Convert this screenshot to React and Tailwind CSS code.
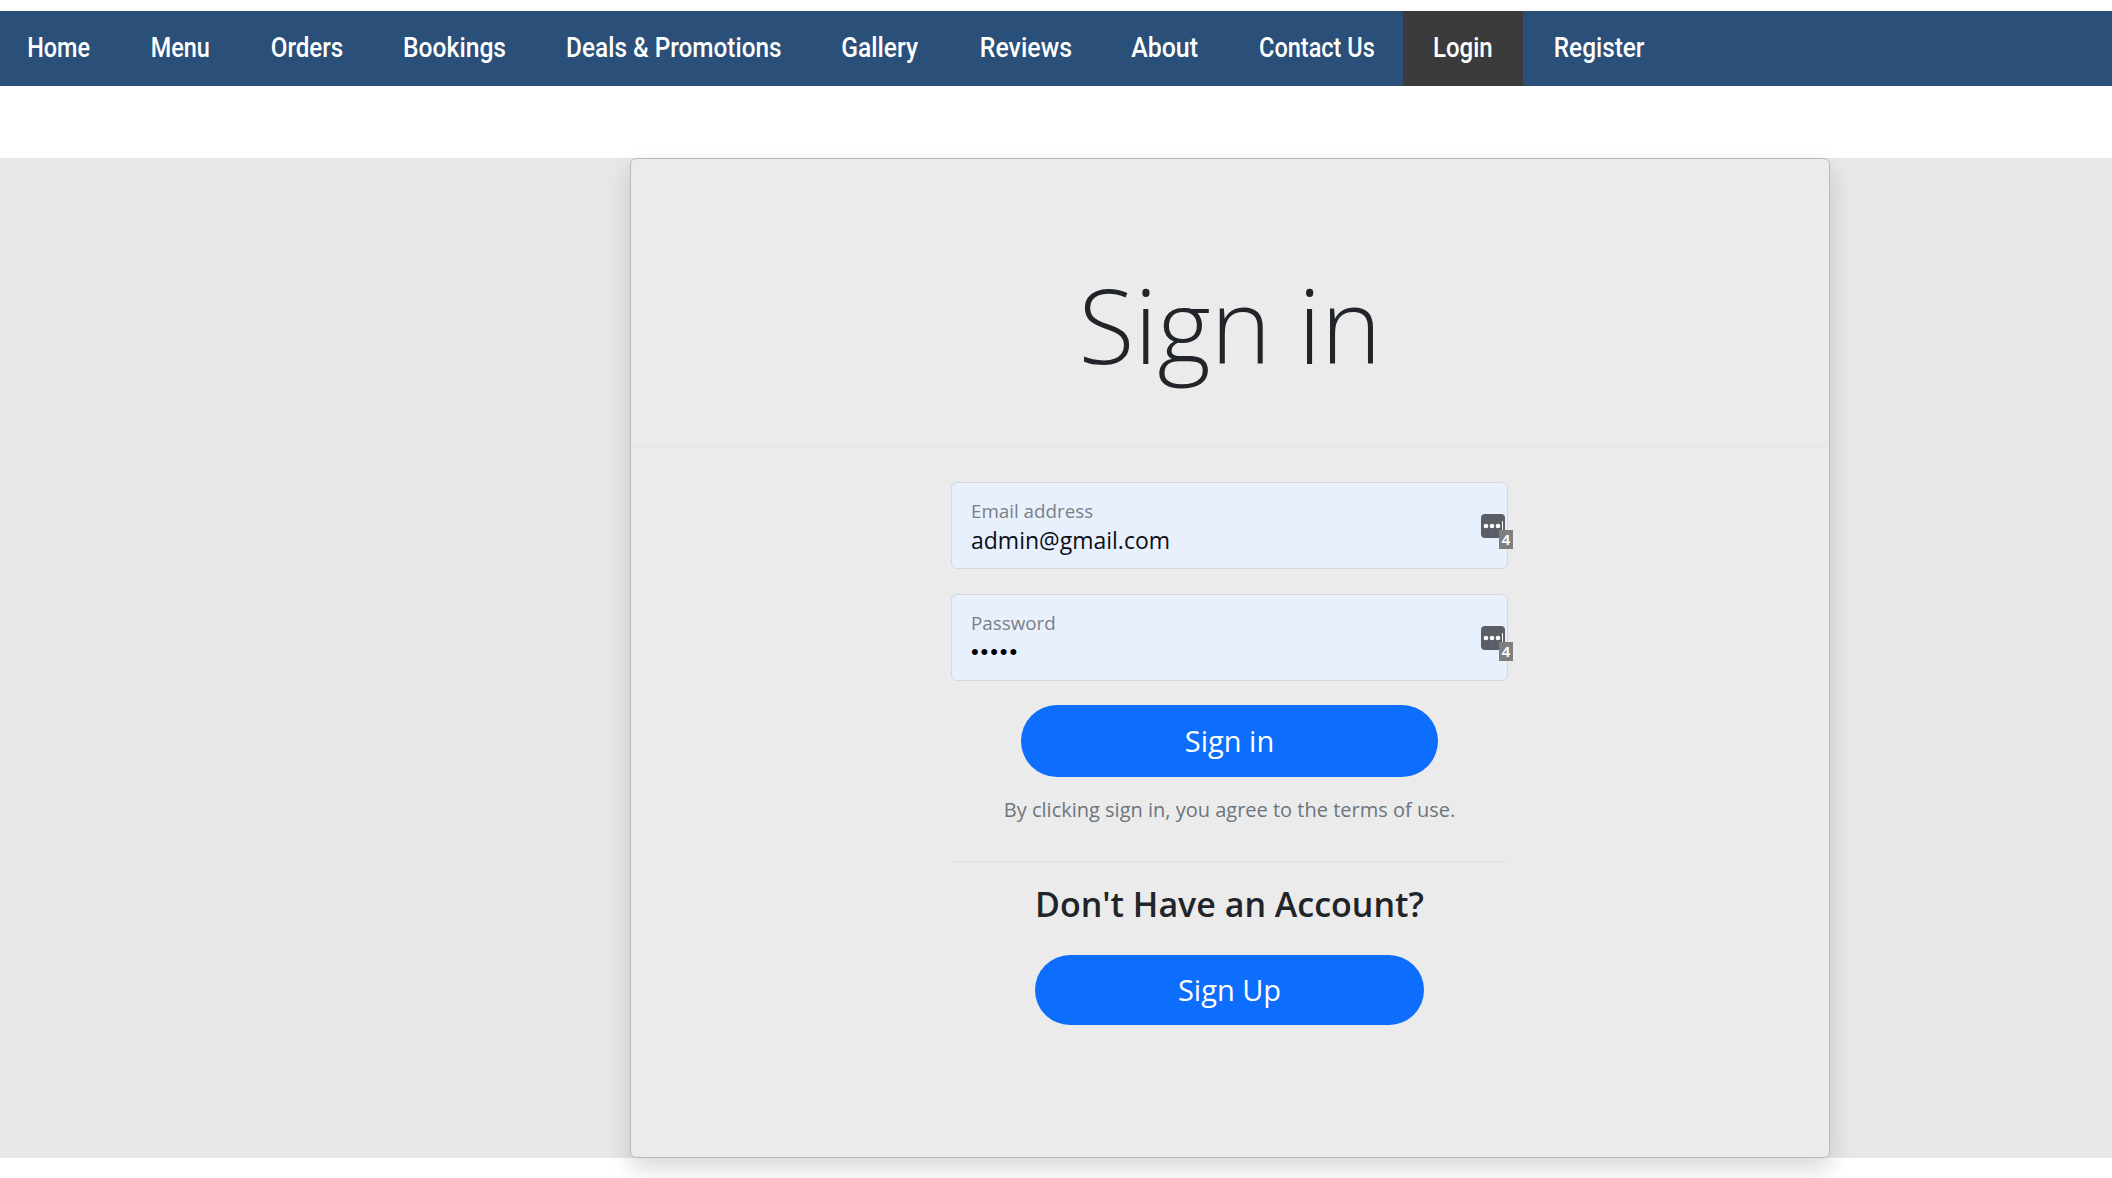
const nav = [
  ["Home", "w-[117px]", "scale-x-[0.836]", false],
  ["Menu", "w-[127px]", "scale-x-[0.838]", false],
  ["Orders", "w-[126px]", "scale-x-[0.864]", false],
  ["Bookings", "w-[170px]", "scale-x-[0.88]", false],
  ["Deals & Promotions", "w-[268px]", "scale-x-[0.87]", false],
  ["Gallery", "w-[143px]", "scale-x-[0.877]", false],
  ["Reviews", "w-[149px]", "scale-x-[0.89]", false],
  ["About", "w-[130px]", "scale-x-[0.89]", false],
  ["Contact Us", "w-[173px]", "scale-x-[0.84]", false],
  ["Login", "w-[120px]", "scale-x-[0.858]", true],
  ["Register", "w-[152px]", "scale-x-[0.87]", false],
];

function KeyIcon() {
  return (
    <div className="absolute -right-[6px] top-[31px] w-[32px] h-[35px]">
      <svg width="24" height="24" viewBox="0 0 24 24" className="absolute left-0 top-0">
        <rect width="24" height="24" rx="4" fill="#5b5d67" />
        <circle cx="5" cy="12" r="2.3" fill="#fff" />
        <circle cx="11" cy="12" r="2.3" fill="#fff" />
        <circle cx="17" cy="12" r="2.3" fill="#fff" />
        <rect x="21" y="7" width="1" height="10" fill="#fff" />
      </svg>
      <div className="absolute left-[18px] top-[16px] w-[14px] h-[19px] bg-[#7f7f7f] text-white text-[15px] font-bold leading-[19px] text-center font-['Liberation_Sans',sans-serif]">
        4
      </div>
    </div>
  );
}

function Field({ label, value, dots }) {
  return (
    <div className="relative h-[87px] rounded-[6px] border border-[#d3d7de] bg-[#e8f0fe] pl-[19px] pt-[16px]">
      <div className="text-[18.8px] leading-[25px] text-[#7a7f86]">{label}</div>
      {dots ? (
        <div className="text-[22px] leading-[32px] tracking-[1.9px] text-black font-['Liberation_Sans',sans-serif]">{value}</div>
      ) : (
        <div className="mt-[1px] text-[23px] leading-[31px] text-[#0b0f14]">{value}</div>
      )}
      <KeyIcon />
    </div>
  );
}

export default function App() {
  return (
    <div className="min-h-[1178px] bg-white pt-[11px] font-['Open_Sans',sans-serif] overflow-hidden">
      <nav className="flex h-[75px] bg-[#2a4f78] text-white">
        {nav.map(([t, w, s, active]) => (
          <div key={t} className={`flex items-center justify-center pb-[2px] ${w} ${active ? "bg-[#3b3b3b]" : ""}`}>
            <span className={`inline-block whitespace-nowrap text-[28px] font-medium font-['Roboto',sans-serif] ${s}`}>{t}</span>
          </div>
        ))}
      </nav>
      <main className="mt-[72px] h-[1000px] bg-[#e7e7e7] pl-[630px]">
        <div className="h-[1000px] w-[1200px] rounded-[6px] border border-[#b9b9b9] bg-[#ebebeb] shadow-[0_11px_22px_rgba(0,0,0,0.15)]">
          <div className="flex h-[288px] items-center justify-center border-b border-[#e2e2e2] pt-[43px]">
            <h1 className="text-[102.5px] font-light leading-none text-[#212529]">Sign in</h1>
          </div>
          <div className="ml-[320px] mt-[35px] w-[557px]">
            <div className="flex flex-col gap-[25px]">
              <Field label="Email address" value="admin@gmail.com" />
              <Field label="Password" value="•••••" dots />
            </div>
            <div className="mt-[24px] flex justify-center">
              <button className="h-[72px] w-[417px] rounded-full bg-[#0d6efd] text-[29px] text-white">Sign in</button>
            </div>
            <p className="mt-[18px] text-center text-[20px] leading-[30px] text-[#6c757d]">By clicking sign in, you agree to the terms of use.</p>
            <div className="mt-[36px] border-t border-[#dee2e6]"></div>
            <h2 className="mt-[18px] text-center text-[34px] font-semibold leading-[48px] text-[#212529]">Don't Have an Account?</h2>
            <div className="mt-[27px] flex justify-center">
              <button className="h-[70px] w-[389px] rounded-full bg-[#0d6efd] text-[29px] text-white">Sign Up</button>
            </div>
          </div>
        </div>
      </main>
    </div>
  );
}
